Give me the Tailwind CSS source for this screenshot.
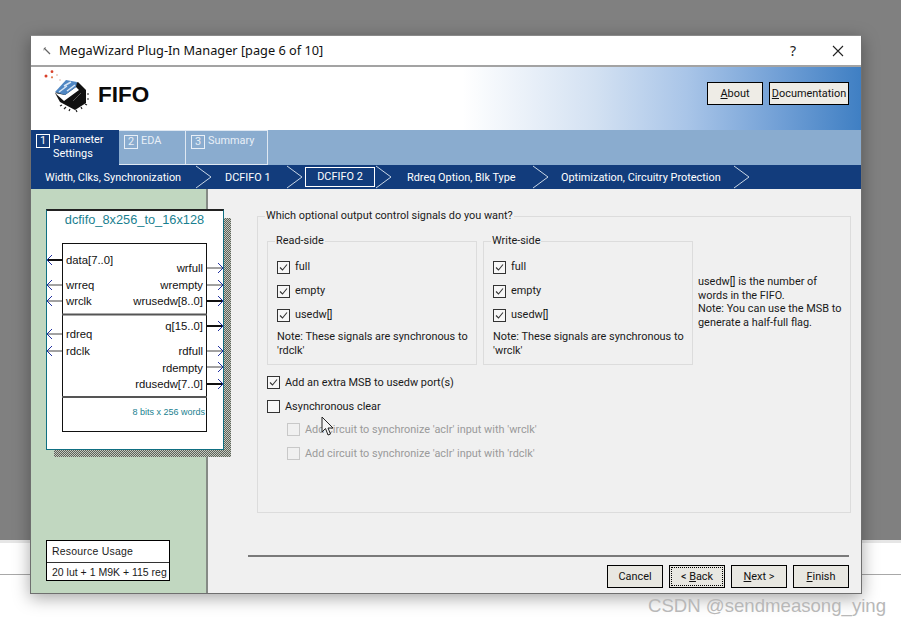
<!DOCTYPE html>
<html lang="en">
<head>
  <meta charset="UTF-8" />
  <title>MegaWizard Plug-In Manager</title>
  <script src="https://cdn.jsdelivr.net/npm/@tailwindcss/browser@4"></script>
</head>
<body class="relative w-[901px] h-[625px] overflow-hidden bg-white font-['Roboto',sans-serif] text-[10.9px] text-[#1a1a1a]">

  <!-- desktop behind the dialog -->
  <div class="h-[540px] bg-[#808080]"></div>
  <div class="h-[3px] bg-[#e6e6e6]"></div>
  <div class="mt-[31px] h-px bg-[#a8a8a8]"></div>

  <!-- dialog window -->
  <div class="absolute left-[30px] top-[35px] w-[832px] h-[559px] flex flex-col border border-[#6f6f6f] border-t-[#8a8a8a] bg-[#f0f0f0] shadow-[0_4px_16px_rgba(0,0,0,0.35)]">

    <!-- title bar -->
    <div class="h-[31px] shrink-0 flex items-center bg-white border-b-2 border-[#a3a3a3]">
      <svg class="ml-[11px] w-[9px] h-[9px]" viewBox="0 0 9 9"><path d="M2 2 L8 8" stroke="#666" stroke-width="1.3"/><path d="M1 4 L3 3.5 M3.5 1 L3.5 3" stroke="#aaa" stroke-width="1"/></svg>
      <span class="ml-[8px] font-['Noto_Sans',sans-serif] text-[12.75px] text-[#111]">MegaWizard Plug-In Manager [page 6 of 10]</span>
      <span class="ml-auto font-['Noto_Sans',sans-serif] text-[14px] text-[#222]">?</span>
      <svg class="ml-[36px] mr-[17px] w-[12px] h-[12px]" viewBox="0 0 12 12"><path d="M1 1 L11 11 M11 1 L1 11" stroke="#222" stroke-width="1.1"/></svg>
    </div>

    <!-- FIFO header -->
    <div class="h-[63px] shrink-0 flex items-start bg-[linear-gradient(90deg,#ffffff_0%,#ffffff_52%,#d3e1f2_68%,#a9c5e8_79%,#72a0d6_90%,#3f7fc3_100%)]">
      <svg class="ml-[13px] mt-[1px] w-[46px] h-[46px]" viewBox="0 0 46 46">
        <circle cx="2" cy="8" r="1.5" fill="#d9402a"/><circle cx="8" cy="3.7" r="1.4" fill="#d9402a"/><circle cx="8" cy="9.3" r="1.1" fill="#e0764a"/><circle cx="13" cy="7" r="0.8" fill="#e0a080"/><circle cx="16" cy="12" r="0.7" fill="#c9a090"/>
        <path d="M11 25 L34 14 L42 22 L42 35 L31 42 L16 34 Z" fill="#111"/>
        <path d="M18 37 L16 38 M22 39 L20 41 M26 41 L25 43 M32 42 L33 44 M37 39 L38 41 M41 36 L43 37 M43 31 L45 31 M43 26 L45 26" stroke="#222" stroke-width="1.2"/>
        <path d="M11 25 L21 27 L32 19 L35 22 L20 33 Z" fill="#fff"/>
        <path d="M11 24 L22 12 L33 14 L32 19 L21 27 Z" fill="#4f86c2"/>
        <path d="M15 24 L23 18 M20 18 L27 14 M23 23 L31 17" stroke="#d8e6f5" stroke-width="1.5"/>
        <path d="M29 33 L37 25" stroke="#555" stroke-width="1"/>
      </svg>
      <span class="ml-[8px] mt-[11px] font-['Liberation_Sans',sans-serif] font-bold text-[22.5px] text-[#0a0a0a]">FIFO</span>
      <div class="ml-auto mr-[12px] mt-[15px] flex gap-[6px]">
        <button class="w-[56px] h-[23px] pt-[1px] bg-[#eeece6] border border-black text-[#111]"><span class="underline">A</span>bout</button>
        <button class="w-[80px] h-[23px] pt-[1px] bg-[#eeece6] border border-black text-[#111]"><span class="underline">D</span>ocumentation</button>
      </div>
    </div>

    <!-- tabs -->
    <div class="h-[35px] shrink-0 flex bg-[#8aaccf] text-[#fff]">
      <div class="w-[88px] flex gap-[3px] pl-[5px] pt-[3px] bg-[#123c7c] leading-[14px]">
        <span class="mt-[1px] w-[14px] h-[14px] flex items-center justify-center border border-white">1</span>
        <span>Parameter<br />Settings</span>
      </div>
      <div class="w-[67px] flex gap-[3px] pl-[5px] pt-[3px] border-t border-r border-b border-[#dfe8f2] text-[#e8eff7] leading-[14px]">
        <span class="mt-[1px] w-[14px] h-[14px] flex items-center justify-center border border-[#e8eff7]">2</span>
        <span>EDA</span>
      </div>
      <div class="w-[82px] flex gap-[3px] pl-[5px] pt-[3px] border-t border-r border-b border-[#dfe8f2] text-[#e8eff7] leading-[14px]">
        <span class="mt-[1px] w-[14px] h-[14px] flex items-center justify-center border border-[#e8eff7]">3</span>
        <span>Summary</span>
      </div>
    </div>

    <!-- step strip -->
    <div class="h-[24px] shrink-0 flex items-center bg-[#123c7c] text-white border-b border-[#123c7c]">
      <span class="ml-[14px] w-[151px] whitespace-nowrap translate-y-[2px]">Width, Clks, Synchronization</span>
      <svg class="w-[16px] h-[24px]" viewBox="0 0 16 24"><path d="M0 1 L15 12 L0 23" fill="none" stroke="#c9d6e6" stroke-width="1"/></svg>
      <span class="ml-[13px] w-[62px] whitespace-nowrap translate-y-[2px]">DCFIFO 1</span>
      <svg class="w-[16px] h-[24px]" viewBox="0 0 16 24"><path d="M0 1 L15 12 L0 23" fill="none" stroke="#c9d6e6" stroke-width="1"/></svg>
      <span class="w-[70px] h-[20px] ml-[2px] pt-[2px] flex items-center justify-center border border-white whitespace-nowrap">DCFIFO 2</span>
      <svg class="ml-[1px] w-[16px] h-[24px]" viewBox="0 0 16 24"><path d="M0 1 L15 12 L0 23" fill="none" stroke="#c9d6e6" stroke-width="1"/></svg>
      <span class="ml-[15px] w-[126px] whitespace-nowrap translate-y-[2px]">Rdreq Option, Blk Type</span>
      <svg class="w-[16px] h-[24px]" viewBox="0 0 16 24"><path d="M0 1 L15 12 L0 23" fill="none" stroke="#c9d6e6" stroke-width="1"/></svg>
      <span class="ml-[12px] w-[173px] whitespace-nowrap translate-y-[2px]">Optimization, Circuitry Protection</span>
      <svg class="w-[16px] h-[24px]" viewBox="0 0 16 24"><path d="M0 1 L15 12 L0 23" fill="none" stroke="#c9d6e6" stroke-width="1"/></svg>
    </div>

    <!-- body -->
    <div class="flex-1 flex min-h-0">

      <!-- symbol panel -->
      <div class="relative w-[177px] shrink-0 bg-[#c1d7c0] border-r-2 border-[#858a85]">
        <div class="absolute left-[23px] top-[29px] w-[177px] h-[239px] bg-[repeating-conic-gradient(#5d6258_0_25%,#c4c8c0_0_50%)] bg-[length:2px_2px]"></div>
        <div class="absolute left-[15px] top-[20px] w-[178px] h-[241px] bg-white border border-[#0f6f82] border-t-[#222] border-t-2">
          <svg class="block" width="176" height="238" viewBox="47 211 176 238">
            <text x="134.5" y="224" text-anchor="middle" font-size="12.8" fill="#1a7f90" font-family="Liberation Sans">dcfifo_8x256_to_16x128</text>
            <rect x="62.5" y="243.5" width="144" height="188" fill="none" stroke="#111"/>
            <path d="M62 314.5 H207" stroke="#555" stroke-width="2"/>
            <path d="M62 397 H207" stroke="#555" stroke-width="2"/>
            <path d="M47 260 H62 M207 301 H223 M207 326 H223 M207 384 H223" stroke="#111" stroke-width="2"/>
            <path d="M47 285 H62 M47 301 H62 M47 334 H62 M47 351 H62 M207 268 H223 M207 285 H223 M207 351 H223 M207 367 H223" stroke="#444" stroke-width="1"/>
            <path d="M52 255 L47 260 L52 265 M52 280 L47 285 L52 290 M52 296 L47 301 L52 306 M52 329 L47 334 L52 339 M52 346 L47 351 L52 356 M218 263 L223 268 L218 273 M218 280 L223 285 L218 290 M218 296 L223 301 L218 306 M218 321 L223 326 L218 331 M218 346 L223 351 L218 356 M218 362 L223 367 L218 372 M218 379 L223 384 L218 389" fill="none" stroke="#1f2fa0" stroke-width="1"/>
            <g font-size="11.3" fill="#111" font-family="Liberation Sans">
              <text x="66" y="264">data[7..0]</text>
              <text x="66" y="289">wrreq</text>
              <text x="66" y="305">wrclk</text>
              <text x="66" y="338">rdreq</text>
              <text x="66" y="355">rdclk</text>
              <g text-anchor="end">
                <text x="203" y="272">wrfull</text>
                <text x="203" y="289">wrempty</text>
                <text x="203" y="305">wrusedw[8..0]</text>
                <text x="203" y="330">q[15..0]</text>
                <text x="203" y="355">rdfull</text>
                <text x="203" y="372">rdempty</text>
                <text x="203" y="388">rdusedw[7..0]</text>
              </g>
            </g>
            <text x="205" y="415" text-anchor="end" font-size="9" fill="#1a7f90" font-family="Liberation Sans">8 bits x 256 words</text>
          </svg>
        </div>
        <div class="absolute left-[15px] bottom-[12px] w-[124px] h-[41px] flex flex-col bg-white border border-black font-['Liberation_Sans',sans-serif] text-[10.5px]">
          <div class="flex-1 flex items-center pl-[5px] pt-[1px] border-b border-[#333] tracking-[0.2px]">Resource Usage</div>
          <div class="h-[17px] flex items-center pl-[5px] pt-[2px] whitespace-nowrap">20 lut + 1 M9K + 115 reg</div>
        </div>
      </div>

      <!-- options -->
      <div class="flex-1 flex flex-col min-w-0 pl-[48px] pr-[10px]">
        <fieldset class="mt-[19px] h-[305px] border border-[#dcdcdc] px-[9px] ml-[1px]">
          <legend class="ml-[-2px] px-[1px]">Which optional output control signals do you want?</legend>
          <div class="mt-[9px] flex">
            <fieldset class="w-[210px] h-[132px] border border-[#dcdcdc] pl-[9px]">
              <legend class="px-[1px] ml-[-2px]">Read-side</legend>
              <div class="mt-[11px] flex flex-col gap-[11px]">
                <label class="h-[13px] flex items-center gap-[5px]">
                  <span class="w-[13px] h-[13px] bg-[#f7f7f7] border border-[#333]"><svg class="block" viewBox="0 0 11 11"><path d="M2 5.5 L4.5 8 L9 2.5" fill="none" stroke="#333" stroke-width="1.1"/></svg></span>full</label>
                <label class="h-[13px] flex items-center gap-[5px]">
                  <span class="w-[13px] h-[13px] bg-[#f7f7f7] border border-[#333]"><svg class="block" viewBox="0 0 11 11"><path d="M2 5.5 L4.5 8 L9 2.5" fill="none" stroke="#333" stroke-width="1.1"/></svg></span>empty</label>
                <label class="h-[13px] flex items-center gap-[5px]">
                  <span class="w-[13px] h-[13px] bg-[#f7f7f7] border border-[#333]"><svg class="block" viewBox="0 0 11 11"><path d="M2 5.5 L4.5 8 L9 2.5" fill="none" stroke="#333" stroke-width="1.1"/></svg></span>usedw[]</label>
              </div>
              <p class="mt-[8px] leading-[14px] whitespace-nowrap">Note: These signals are synchronous to<br />'rdclk'</p>
            </fieldset>
            <fieldset class="ml-[6px] w-[210px] h-[132px] border border-[#dcdcdc] pl-[9px]">
              <legend class="px-[1px] ml-[-2px]">Write-side</legend>
              <div class="mt-[11px] flex flex-col gap-[11px]">
                <label class="h-[13px] flex items-center gap-[5px]">
                  <span class="w-[13px] h-[13px] bg-[#f7f7f7] border border-[#333]"><svg class="block" viewBox="0 0 11 11"><path d="M2 5.5 L4.5 8 L9 2.5" fill="none" stroke="#333" stroke-width="1.1"/></svg></span>full</label>
                <label class="h-[13px] flex items-center gap-[5px]">
                  <span class="w-[13px] h-[13px] bg-[#f7f7f7] border border-[#333]"><svg class="block" viewBox="0 0 11 11"><path d="M2 5.5 L4.5 8 L9 2.5" fill="none" stroke="#333" stroke-width="1.1"/></svg></span>empty</label>
                <label class="h-[13px] flex items-center gap-[5px]">
                  <span class="w-[13px] h-[13px] bg-[#f7f7f7] border border-[#333]"><svg class="block" viewBox="0 0 11 11"><path d="M2 5.5 L4.5 8 L9 2.5" fill="none" stroke="#333" stroke-width="1.1"/></svg></span>usedw[]</label>
              </div>
              <p class="mt-[8px] leading-[14px] whitespace-nowrap">Note: These signals are synchronous to<br />'wrclk'</p>
            </fieldset>
            <p class="ml-[5px] mt-[42px] w-[143px] leading-[13.5px] whitespace-nowrap">usedw[] is the number of<br />words in the FIFO.<br />Note: You can use the MSB to<br />generate a half-full flag.</p>
          </div>
          <div class="mt-[11px] flex flex-col gap-[11px]">
            <label class="h-[13px] flex items-center gap-[5px]">
              <span class="w-[13px] h-[13px] bg-[#f7f7f7] border border-[#333]"><svg class="block" viewBox="0 0 11 11"><path d="M2 5.5 L4.5 8 L9 2.5" fill="none" stroke="#333" stroke-width="1.1"/></svg></span>Add an extra MSB to usedw port(s)</label>
            <label class="h-[13px] mb-[-1px] flex items-center gap-[5px]">
              <span class="w-[13px] h-[13px] bg-[#f7f7f7] border border-[#333]"></span>Asynchronous clear</label>
            <label class="ml-[20px] h-[13px] flex items-center gap-[5px] text-[#9a9a9a]">
              <span class="w-[13px] h-[13px] bg-[#f0f0f0] border border-[#c8c8c8]"></span>Add circuit to synchronize 'aclr' input with 'wrclk'</label>
            <label class="ml-[20px] h-[13px] flex items-center gap-[5px] text-[#9a9a9a]">
              <span class="w-[13px] h-[13px] bg-[#f0f0f0] border border-[#c8c8c8]"></span>Add circuit to synchronize 'aclr' input with 'rdclk'</label>
          </div>
        </fieldset>

        <!-- footer -->
        <div class="mt-auto mb-[5px] ml-[-8px] mr-[2px]">
          <div class="h-[2px] bg-[#7a7a7a]"></div>
          <div class="mt-[8px] flex justify-end gap-[6px] text-[#111]">
            <button class="w-[56px] h-[23px] pt-[1px] bg-[#e8e7e1] border border-black">Cancel</button>
            <button class="w-[56px] h-[23px] pt-[1px] bg-[#e8e7e1] border border-black outline-1 outline-dotted outline-black -outline-offset-3">&lt; <span class="underline">B</span>ack</button>
            <button class="w-[56px] h-[23px] pt-[1px] bg-[#e8e7e1] border border-black"><span class="underline">N</span>ext &gt;</button>
            <button class="w-[56px] h-[23px] pt-[1px] bg-[#e8e7e1] border border-black"><span class="underline">F</span>inish</button>
          </div>
        </div>
      </div>
    </div>
  </div>

  <!-- mouse pointer over the dialog -->
  <svg class="absolute left-[321px] top-[416px] w-[13px] h-[21px]" viewBox="0 0 13 21"><path d="M1 1 V16 L4.5 12.5 L7 19 L9.5 18 L7 12 H12 Z" fill="#f4f4f4" stroke="#222" stroke-width="1"/></svg>

  <!-- watermark -->
  <span class="absolute left-[648px] top-[592px] font-['Liberation_Sans',sans-serif] text-[18.6px] text-[#b8b8b8] whitespace-nowrap">CSDN @sendmeasong_ying</span>
</body>
</html>
